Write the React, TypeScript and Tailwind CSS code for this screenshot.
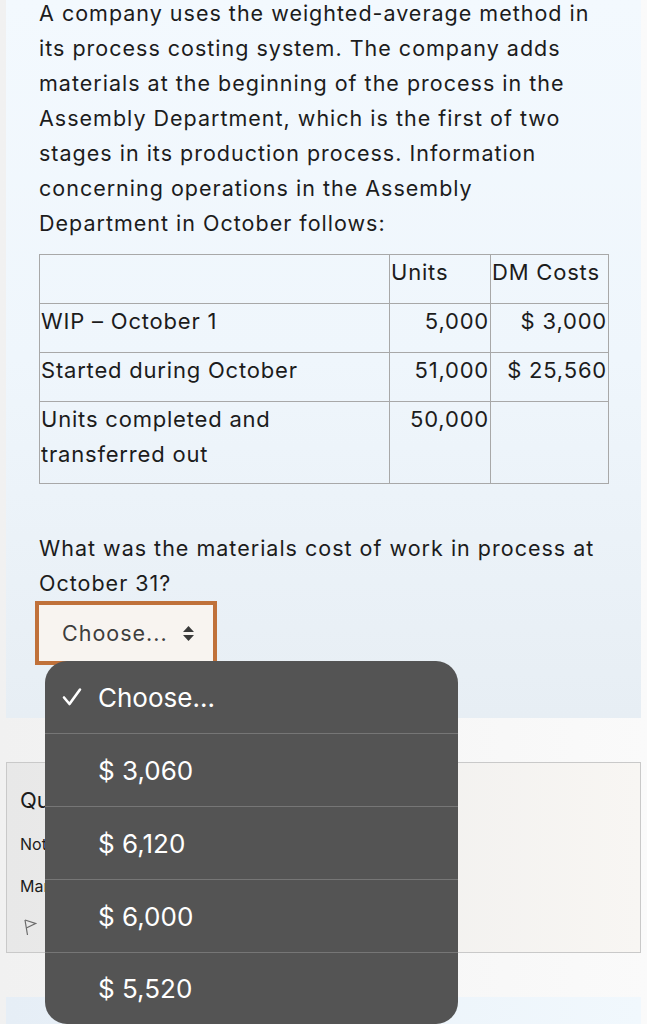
import { Fragment } from 'react';

const rows = [
  { label: 'WIP – October 1', units: '5,000', cost: '$ 3,000' },
  { label: 'Started during October', units: '51,000', cost: '$ 25,560' },
  { label: 'Units completed and transferred out', units: '50,000', cost: '' },
];

const options = ['$ 3,060', '$ 6,120', '$ 6,000', '$ 5,520'];

function SelectArrows() {
  return (
    <svg width="13" height="17" viewBox="0 0 13 17" className="ml-[14px]">
      <path d="M6.5 1 L12 7 H1 Z" fill="#3a3a3a" />
      <path d="M6.5 16 L12 10 H1 Z" fill="#3a3a3a" />
    </svg>
  );
}

function CheckIcon() {
  return (
    <svg width="20" height="20" viewBox="0 0 20 20" fill="none" stroke="white" strokeWidth="2.6" strokeLinecap="round" strokeLinejoin="round">
      <path d="M2 10.5 L7.5 17 L18 2.5" />
    </svg>
  );
}

function FlagIcon() {
  return (
    <svg width="14" height="18" viewBox="0 0 14 18" fill="none" stroke="#6b6b6b" strokeWidth="1.2">
      <path d="M2 2 L4.5 17" />
      <path d="M2 2 L12.5 5.5 L3.3 10" />
    </svg>
  );
}

export default function App() {
  return (
    <div
      className="relative h-[1024px] w-[647px] overflow-hidden bg-gradient-to-r from-[#f1f1f1] to-[#fafafa] text-[#1c1c1c]"
      style={{ fontFamily: 'Inter, Roboto, "Noto Sans", sans-serif' }}
    >
      <div className="mx-[6px] flow-root h-[718px] bg-gradient-to-b from-[#f3f9fe] via-[#eff6fc] to-[#e7eef4] pl-[33px] pr-[20px]">
        <p className="-mt-[4px] max-w-[560px] text-[21.5px] leading-[35px] tracking-[1px]">
          A company uses the weighted-average method in its process costing system. The company adds
          materials at the beginning of the process in the Assembly Department, which is the first of
          two stages in its production process. Information concerning operations in the Assembly
          Department in October follows:
        </p>

        <table className="mt-[13px] w-[570px] border-collapse border border-[#4a4a4a] text-[22px] leading-[35px] tracking-[0.8px]">
          <tbody>
            <tr className="h-[48px]">
              <td className="w-[350px] border border-[#a8a8a8] px-[1px] pb-[13px] align-top"></td>
              <td className="w-[101px] border border-[#a8a8a8] px-[1px] pb-[13px] align-top">Units</td>
              <td className="border border-[#a8a8a8] px-[1px] pb-[13px] align-top">DM Costs</td>
            </tr>
            {rows.map((r, i) => (
              <tr key={r.label} className="h-[49px]">
                <td className={`border border-[#a8a8a8] px-[1px] pr-[60px] align-top ${i === 2 ? 'pb-[11px]' : 'pb-[13px]'}`}>{r.label}</td>
                <td className="border border-[#a8a8a8] px-[1px] pb-[11px] text-right align-top">{r.units}</td>
                <td className="border border-[#a8a8a8] px-[1px] pb-[11px] text-right align-top">{r.cost}</td>
              </tr>
            ))}
          </tbody>
        </table>

        <p className="mt-[47px] max-w-[560px] text-[21.5px] leading-[35px] tracking-[1px]">
          What was the materials cost of work in process at October 31?
        </p>

        <div className="-ml-[4px] flex h-[64px] w-[182px] items-center border-[4px] border-[#c0713a] bg-[#f8f4f0] pl-[23px] text-[21.5px] tracking-[1px] text-[#3d3d3d]">
          Choose...
          <SelectArrows />
        </div>
      </div>

      <div className="mx-[6px] mt-[44px] h-[191px] border border-[#c9c9c9] bg-gradient-to-r from-[#e8e8e8] to-[#f8f6f3] px-[13px] pt-[21px]">
        <div className="text-[22px] leading-[32px]">Question 10</div>
        <div className="mt-[16px] text-[16px] leading-[24px]">Not yet answered</div>
        <div className="mt-[18px] text-[16px] leading-[24px]">Marked out of 1.00</div>
        <div className="mt-[20px] flex items-center pl-[3px]">
          <FlagIcon />
        </div>
      </div>

      <div className="mx-[6px] mt-[44px] h-[40px] bg-gradient-to-r from-[#e6eef6] to-[#f1f8fd]"></div>

      <div className="absolute left-[45px] top-[661px] w-[413px] overflow-hidden rounded-[22px] bg-[#545454] text-[26px] text-white">
        <div className="flex h-[72px] items-center pl-[17px]">
          <span className="flex w-[36px] items-center">
            <CheckIcon />
          </span>
          <span>Choose...</span>
        </div>
        {options.map((o, i) => (
          <Fragment key={o}>
            <div className="h-px bg-[#767676]" />
            <div className={`flex items-center pl-[53px] ${i === options.length - 1 ? 'h-[71px]' : 'h-[72px]'}`}>
              {o}
            </div>
          </Fragment>
        ))}
      </div>
    </div>
  );
}
